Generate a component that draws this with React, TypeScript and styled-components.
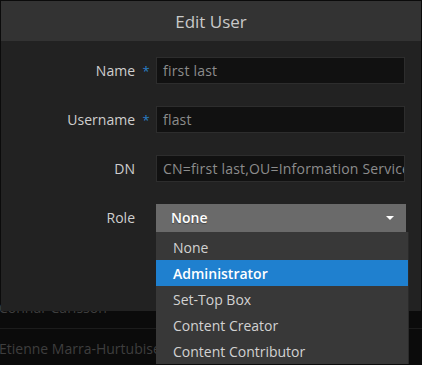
import React from "react";
import styled, { createGlobalStyle } from "styled-components";

const GlobalStyle = createGlobalStyle`
  html, body { margin: 0; padding: 0; }
  body {
    background: #0b0b0b;
    font-family: "Open Sans", "Noto Sans", sans-serif;
    width: 422px;
    height: 365px;
    overflow: hidden;
  }
`;

const Page = styled.div`
  position: relative;
  width: 422px;
  height: 365px;
  overflow: hidden;
  background: #0b0b0b;
`;

const List = styled.div`
  display: flex;
  flex-direction: column;
  padding-top: 286px;
`;

const ListRow = styled.div<{ $first?: boolean }>`
  height: ${(p) => (p.$first ? "42px" : "38px")};
  display: flex;
  align-items: center;
  border-top: ${(p) => (p.$first ? "none" : "1px solid #1c1c1c")};
  color: #3e3e3e;
  font-size: 14px;
  text-indent: -1px;
  white-space: nowrap;
`;

const Modal = styled.div`
  position: absolute;
  top: 1px;
  left: 1px;
  width: 420px;
  height: 310px;
  background: #222222;
  display: flex;
  flex-direction: column;
`;

const Header = styled.div`
  height: 40px;
  background: #333333;
  display: flex;
  align-items: center;
  justify-content: center;
  color: #c9c9c9;
  font-size: 17px;
`;

const Form = styled.div`
  display: flex;
  flex-direction: column;
  gap: 22px;
  padding-top: 16px;
`;

const Row = styled.div`
  display: flex;
  align-items: center;
  height: 27px;
  position: relative;
`;

const Label = styled.div`
  width: 155px;
  display: flex;
  justify-content: flex-end;
  align-items: center;
  color: #cfcfcf;
  font-size: 14px;
`;

const Marker = styled.span`
  width: 20px;
  text-align: center;
  color: #2a7fc8;
  font-size: 13px;
  padding-left: 1px;
`;

const Input = styled.div`
  box-sizing: border-box;
  width: 249px;
  height: 27px;
  background: #111111;
  border: 1px solid #2d2d2d;
  color: #8c8c8c;
  font-size: 14px;
  letter-spacing: 0.2px;
  display: flex;
  align-items: center;
  padding-left: 6px;
  white-space: nowrap;
  overflow: hidden;
`;

const Select = styled.div`
  box-sizing: border-box;
  width: 250px;
  height: 28px;
  background: #6a6a6a;
  color: #ffffff;
  font-size: 14px;
  font-weight: 600;
  display: flex;
  align-items: center;
  justify-content: space-between;
  padding: 0 12px 0 15px;
  text-shadow: 0 1px 1px rgba(0, 0, 0, 0.35);
`;

const Caret = styled.span`
  width: 0;
  height: 0;
  border-left: 4px solid transparent;
  border-right: 4px solid transparent;
  border-top: 4px solid #ffffff;
`;

const Menu = styled.div`
  position: absolute;
  top: 28px;
  left: 155px;
  width: 252px;
  background: #383838;
  border-right: 1px solid #2a2a2a;
  padding-top: 2px;
  display: flex;
  flex-direction: column;
  z-index: 2;
`;

const Item = styled.div<{ $active?: boolean }>`
  height: 26px;
  display: flex;
  align-items: center;
  padding-left: 17px;
  font-size: 14px;
  color: ${(p) => (p.$active ? "#ffffff" : "#d2d2d2")};
  background: ${(p) => (p.$active ? "#1f80cf" : "transparent")};
  font-weight: ${(p) => (p.$active ? 600 : 400)};
`;

const fields = [
  { label: "Name", required: true, value: "first last" },
  { label: "Username", required: true, value: "flast" },
  { label: "DN", required: false, value: "CN=first last,OU=Information Services" },
];

const roles = ["None", "Administrator", "Set-Top Box", "Content Creator", "Content Contributor"];

export default function App() {
  return (
    <>
      <GlobalStyle />
      <Page>
        <List>
          <ListRow $first>Connar Carlsson</ListRow>
          <ListRow>Etienne Marra-Hurtubise</ListRow>
        </List>
        <Modal>
          <Header>Edit User</Header>
          <Form>
            {fields.map((f) => (
              <Row key={f.label}>
                <Label>
                  {f.label}
                  <Marker>{f.required ? "*" : ""}</Marker>
                </Label>
                <Input>{f.value}</Input>
              </Row>
            ))}
            <Row>
              <Label>
                Role
                <Marker />
              </Label>
              <Select>
                None
                <Caret />
              </Select>
              <Menu>
                {roles.map((r) => (
                  <Item key={r} $active={r === "Administrator"}>
                    {r}
                  </Item>
                ))}
              </Menu>
            </Row>
          </Form>
        </Modal>
      </Page>
    </>
  );
}
